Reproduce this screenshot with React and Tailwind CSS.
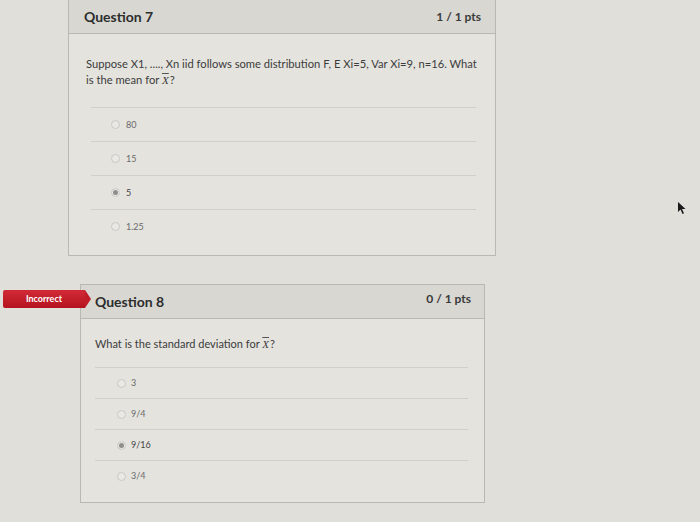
export default function App() {
  const font = { fontFamily: "Lato, 'Noto Sans', sans-serif" };
  const Xbar = () => (
    <span className="mr-[1px] italic overline decoration-[#555]" style={{ fontFamily: "'Liberation Serif', serif" }}>X</span>
  );
  const Radio = ({ checked }) => (
    <span className="inline-flex h-[9px] w-[9px] items-center justify-center rounded-full border border-[#c9c8c4] bg-[#e9e8e4]">
      {checked && <span className="h-[5px] w-[5px] rounded-full bg-[#8f8e8a]"></span>}
    </span>
  );
  const q7 = ["80", "15", "5", "1.25"];
  const q8 = ["3", "9/4", "9/16", "3/4"];
  return (
    <div className="relative h-[522px] w-[700px] overflow-hidden bg-[#e0dfda]" style={font}>
      {/* Question 7 */}
      <div className="ml-[68px] mt-[-1px] w-[428px] border border-[#b9b8b3] bg-[#e4e3de]">
        <div className="flex h-[34px] items-center justify-between border-b border-[#b9b8b3] bg-[#d8d7d2] pl-[15px] pr-[14px]">
          <span className="text-[14px] font-bold text-[#2d2d2d]">Question 7</span>
          <span className="text-[12px] font-bold text-[#3a3a3a]">1 / 1 pts</span>
        </div>
        <div className="pl-[17px] pr-[8px] pt-[22px] text-[11.2px] leading-[16px] text-[#3c3c3c]">
          Suppose X1, ...., Xn iid follows some distribution F, E Xi=5, Var Xi=9, n=16. What is the mean for <Xbar />?
        </div>
        <div className="mt-[19px] pb-[12px] pl-[22px] pr-[19px]">
          {q7.map((o, i) => (
            <div key={o} className="flex h-[34px] items-center gap-[6px] border-t border-[#d0cfca] pl-[20px] text-[9px] text-[#6a6a6a]">
              <Radio checked={i === 2} />
              <span className={i === 2 ? "text-[#444]" : ""}>{o}</span>
            </div>
          ))}
        </div>
      </div>

      {/* Incorrect badge */}
      <div className="absolute left-[3px] top-[290px] flex h-[18px] items-center">
        <div className="flex h-[18px] w-[82px] items-center justify-center rounded-l-[2px] bg-gradient-to-b from-[#d12a36] to-[#b5121f] text-[9px] font-bold text-white">
          Incorrect
        </div>
        <div className="h-0 w-0 border-y-[9px] border-l-[6px] border-y-transparent border-l-[#c01c28]"></div>
      </div>

      {/* Question 8 */}
      <div className="ml-[80px] mt-[28px] w-[405px] border border-[#b9b8b3] bg-[#e4e3de]">
        <div className="flex h-[34px] items-center justify-between border-b border-[#b9b8b3] bg-[#d8d7d2] pl-[14px] pr-[13px]">
          <span className="text-[14px] font-bold text-[#2d2d2d]">Question 8</span>
          <span className="mt-[-6px] text-[12px] font-bold text-[#3a3a3a]">0 / 1 pts</span>
        </div>
        <div className="px-[14px] pt-[17px] text-[11px] leading-[16px] text-[#3c3c3c]">
          What is the standard deviation for <Xbar />?
        </div>
        <div className="mt-[15px] pb-[11px] pl-[14px] pr-[16px]">
          {q8.map((o, i) => (
            <div key={o} className="flex h-[31px] items-center gap-[5px] border-t border-[#d0cfca] pl-[22px] text-[9px] text-[#6a6a6a]">
              <Radio checked={i === 2} />
              <span className={i === 2 ? "text-[#444]" : ""}>{o}</span>
            </div>
          ))}
        </div>
      </div>

      {/* cursor */}
      <svg className="absolute left-[677px] top-[201px]" width="10" height="14" viewBox="0 0 10 14">
        <path d="M1 1 L1 11 L3.5 8.5 L5.5 13 L7 12.3 L5 8 L8.5 8 Z" fill="#1a1a1a" />
      </svg>
    </div>
  );
}
